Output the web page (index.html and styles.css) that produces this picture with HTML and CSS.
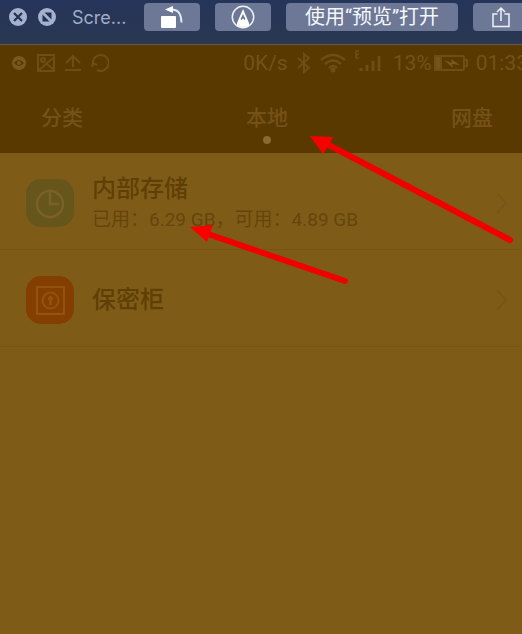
FILE: index.html
```html
<!DOCTYPE html>
<html lang="zh-CN">
<head>
<meta charset="utf-8">
<meta name="viewport" content="width=device-width, initial-scale=1">
<title>本地</title>
<link rel="stylesheet" href="styles.css">
</head>
<body>
<header class="toolbar">
  <button class="round" aria-label="关闭"><svg width="18" height="18" viewBox="0 0 18 18"><circle cx="9" cy="9" r="9" fill="#a5b2cf"/><path d="M5 5l8 8M13 5l-8 8" stroke="#25314e" stroke-width="2.2"/></svg></button>
  <button class="round" aria-label="全屏"><svg width="18" height="18" viewBox="0 0 18 18"><circle cx="9" cy="9" r="9" fill="#a5b2cf"/><path d="M6.500 4.500h7v7zM4.500 6.500v7h7z" fill="#25314e"/></svg></button>
  <span class="name">Scre...</span>
  <button class="tool" aria-label="旋转"><svg width="24" height="26" viewBox="0 0 24 26"><rect x="1" y="12" width="15" height="12" rx="1" fill="#fff"/><path d="M11 5.500c7 0 10 3.500 10.500 13" fill="none" stroke="#e4e9f3" stroke-width="2"/><path d="M13 2v7L5 5.500z" fill="#fff"/></svg></button>
  <button class="tool" aria-label="标记"><svg width="24" height="24" viewBox="0 0 24 24"><circle cx="12" cy="12" r="10.700" fill="none" stroke="#eef2f8" stroke-width="1.500"/><path d="M12 4L6 18v3q6 2 12 0v-3z" fill="#fff"/><path d="M12 9l2.500 5-1 1-1.500-1.500-1.500 1.500-1-1z" fill="#707b98"/></svg></button>
  <button class="tool open">使用“预览”打开</button>
  <button class="tool" aria-label="共享"><svg width="20" height="24" viewBox="0 0 20 24" fill="none" stroke="#eef2f8" stroke-width="1.500"><path d="M6.500 9H2v12.500h16V9h-4.500M10 16V3M6 7l4-4 4 4"/></svg></button>
</header>
<section class="phone">
  <div class="dark">
    <div class="status">
      <div class="notices">
        <svg width="16" height="22" viewBox="0 0 16 22"><circle cx="8" cy="11" r="7" fill="#7a581c"/><path d="M3 11q5-6 10 0-5 6-10 0z" fill="#593900"/><circle cx="8" cy="11" r="2" fill="#7a581c"/></svg>
        <svg class="line" width="18" height="22" viewBox="0 0 18 22"><rect x="1" y="3" width="16" height="16"/><path d="M2 18L16 6M10 12l6 5"/><circle cx="6" cy="8" r="2"/></svg>
        <svg class="line" width="16" height="22" viewBox="0 0 16 22"><path d="M0 18h16M8 15V4M1 11l7-7 7 7"/></svg>
        <svg class="line" width="18" height="22" viewBox="0 0 18 22"><path d="M6 18a8 8 0 1 0-4-5M1 15l1-4 4 2"/></svg>
      </div>
      <div class="signals">
        <span>0K/s</span>
        <svg class="line" width="16" height="22" viewBox="0 0 16 22"><path d="M2 6l11 10-5 4V2l5 4L2 16"/></svg>
        <svg class="line" width="26" height="22" viewBox="0 0 26 22"><path d="M1 8q12-10 24 0M5 12q8-7 16 0M9 16q4-4 8 0" stroke-width="2.500"/><circle cx="13" cy="18" r="1.500" fill="#7a581c"/></svg>
        <svg class="line" width="28" height="28" viewBox="0 0 28 28"><path d="M5 2H2v7h3M2 5.500h3" stroke-width="1.500"/><path d="M7 19v3M13 16v6M19 12v10M25 7v15" stroke-width="3"/></svg>
        <span class="percent">13%</span>
        <svg class="line" width="34" height="22" viewBox="0 0 34 22"><rect x="1" y="4" width="29" height="14" rx="1"/><rect x="1" y="4" width="6" height="14" fill="#71551a"/><path d="M31 8h2v6h-2"/><path d="M10 8l8 3-1-4 9 6-8-1 1 4z" fill="#7a581c" stroke="none"/></svg>
        <span>01:33</span>
      </div>
    </div>
    <nav class="tabs">
      <a href="#category">分类</a>
      <a class="active" href="#local">本地</a>
      <a href="#cloud">网盘</a>
    </nav>
  </div>
  <main>
    <a class="row" href="#storage">
      <svg class="icon" viewBox="0 0 48 48"><rect width="48" height="48" rx="15" fill="#67561c"/><circle cx="24" cy="25" r="13" fill="none" stroke="#7a6125" stroke-width="2.500"/><path d="M24 13v12h9" fill="none" stroke="#7a6125" stroke-width="2.500"/></svg>
      <span class="copy"><strong>内部存储</strong><small>已用：6.29 GB，可用：4.89 GB</small></span>
      <svg class="chevron" width="12" height="22" viewBox="0 0 12 22"><path d="M1 1l9 10L1 21"/></svg>
    </a>
    <a class="row" href="#safe">
      <svg class="icon" viewBox="0 0 48 48"><rect width="48" height="48" rx="15" fill="#843f00"/><g fill="none" stroke="#92530c" stroke-width="2"><rect x="11" y="11" width="27" height="27"/><circle cx="24.500" cy="24.500" r="8"/><path d="M24.500 24v5" stroke-width="2.500"/></g><circle cx="24.500" cy="22.500" r="2.500" fill="#92530c"/></svg>
      <span class="copy"><strong>保密柜</strong></span>
      <svg class="chevron" width="12" height="22" viewBox="0 0 12 22"><path d="M1 1l9 10L1 21"/></svg>
    </a>
  </main>
</section>
<svg class="arrows" width="522" height="300" viewBox="0 0 522 300" aria-hidden="true">
  <g stroke="#f00000" stroke-width="6" stroke-linecap="round"><path d="M325 143L510 240M205 233L345 281"/></g>
  <path d="M310 136l23 1-3 6-7 11zM190 227l23-2-3 8-3 9z" fill="#fa0000"/>
</svg>
</body>
</html>
```
FILE: styles.css
```css
* { box-sizing: border-box; }

body {
  margin: 0;
  min-height: 100vh;
  position: relative;
  display: flex;
  flex-direction: column;
  overflow-x: hidden;
  background: #7e5c18;
  font-family: Roboto, "Noto Sans CJK SC", sans-serif;
}

a { color: inherit; text-decoration: none; }
button { border: 0; padding: 0; font: inherit; color: inherit; }
svg { display: block; flex: none; }

.toolbar {
  display: flex;
  align-items: flex-start;
  height: 45px;
  padding: 3px 0 0 9px;
  overflow: hidden;
  background: linear-gradient(#25345a, #2b3750);
  border-bottom: 1px solid #625b55;
}

.round {
  flex: none;
  margin: 5px 11px 0 0;
  background: none;
}

.name {
  flex: none;
  width: 57px;
  margin: 0 15px 0 5px;
  color: #a0acc9;
  font: 18px/30px Inter, sans-serif;
}

.tool {
  flex: none;
  display: flex;
  align-items: center;
  justify-content: center;
  width: 56px;
  height: 28px;
  margin-right: 15px;
  border-radius: 4px;
  background: #6c7895;
}

.open {
  width: 172px;
  color: #f4f6fb;
  font: 20px/28px Roboto, "Noto Sans CJK SC", sans-serif;
}

.dark {
  color: #745217;
  background: #593900;
}

.status {
  display: flex;
  justify-content: space-between;
  align-items: center;
  height: 36px;
  padding-left: 11px;
  font-size: 21px;
  white-space: nowrap;
  overflow: hidden;
}

.notices, .signals { display: flex; align-items: center; }
.notices { gap: 10px; }
.signals { gap: 8px; margin-right: -6px; }
.percent { margin: 0 -6px 0 3px; }
.line { fill: none; stroke: #6f4d13; stroke-width: 2; }

.tabs {
  display: flex;
  justify-content: space-between;
  height: 72px;
  padding: 20px 29px 0 41px;
  font: 21px/30px "Noto Sans CJK SC", sans-serif;
  font-weight: 500;
}

.active::after {
  content: "";
  display: block;
  width: 8px;
  height: 8px;
  margin: 5px auto 0;
  border-radius: 50%;
  background: #8b692c;
}

.row {
  display: flex;
  align-items: center;
  gap: 18px;
  height: 97px;
  padding: 4px 14px 0 26px;
  color: #5f3f06;
  border-bottom: 1px solid #775615;
}

.icon { width: 48px; height: 48px; }
.copy { flex: 1; display: flex; flex-direction: column; }
.copy strong { font-size: 24px; line-height: 34px; font-weight: 500; }
.copy small { font-size: 19px; line-height: 28px; color: #65450b; white-space: nowrap; }
.chevron { fill: none; stroke: #775616; stroke-width: 2; }

.arrows {
  position: absolute;
  top: 0;
  left: 0;
  pointer-events: none;
}
```
